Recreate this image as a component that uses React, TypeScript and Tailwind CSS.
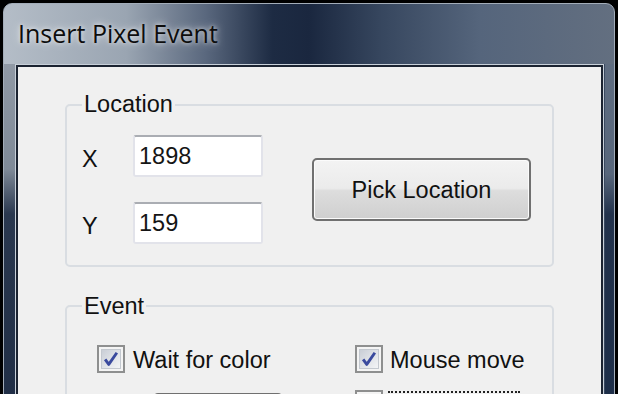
import React from "react";

function CheckBox({ checked }: { checked: boolean }) {
  return (
    <span className="block w-[28px] h-[28px] shrink-0 border-2 border-[#8e8f8f] bg-[#f4f4f4] p-[2px]">
      <span className="block w-full h-full border border-[#c3c8cf] bg-[linear-gradient(135deg,#c9ced6_0%,#dfe2e7_50%,#f3f4f6_100%)]">
        {checked && (
          <svg viewBox="0 0 20 20" className="w-full h-full">
            <path
              d="M3.5 10.5 L7.5 16 L16.5 3"
              fill="none"
              stroke="#3a4a9e"
              strokeWidth="3.2"
              strokeLinejoin="round"
            />
          </svg>
        )}
      </span>
    </span>
  );
}

function TextBox({ value }: { value: string }) {
  return (
    <div className="w-[130px] h-[42px] rounded-[3px] border-2 border-[#e2e3ea] border-t-[#aaadb3] bg-white pl-[4px] flex items-center text-[#151515]">
      {value}
    </div>
  );
}

function Group({ title, className, children }: { title: string; className?: string; children: React.ReactNode }) {
  return (
    <fieldset
      className={`w-[489px] rounded-[5px] border-2 border-[#d9dde2] pl-[15px] ${className ?? ""}`}
    >
      <legend className="px-[2px] leading-[27px] text-[#111]">{title}</legend>
      {children}
    </fieldset>
  );
}

export default function App() {
  return (
    <div className="w-[618px] h-[394px] overflow-hidden bg-black px-[3px] pt-[3px] font-['Liberation_Sans',Arial,sans-serif] text-[23.5px]">
      <div className="h-[440px] flex flex-col rounded-t-[9px] border border-[#a3adb9] overflow-hidden bg-[linear-gradient(to_right,#b4bdc7_0%,#9aa5b2_20%,#5a687e_33%,#1d2b43_44%,#1a273f_50%,#37475f_62%,#55657c_78%,#636f80_100%)]">
        {/* title bar */}
        <div className="h-[60px] shrink-0 pl-[14px] pt-[14px]">
          <div className="font-['Open_Sans',sans-serif] text-[25px] leading-[30px] text-[#0d0d0d] [text-shadow:0_0_10px_rgba(255,255,255,0.75),0_0_4px_rgba(255,255,255,0.6)]">
            Insert Pixel Event
          </div>
        </div>

        <div className="flex flex-1">
          <div className="w-[11px] shrink-0 bg-[linear-gradient(to_bottom,#9099a5_0px,#7f8a98_105px,#2a384f_150px,#1d2b43_100%)]" />
          <div className="flex-1 border border-[#c8d0d9]">
            <div className="h-full border-2 border-[#1b2331] bg-[#f0f0f0] pl-[47px]">
              <Group title="Location" className="mt-[24px] pb-[20px]">
                <div className="pt-[17px] flex items-center">
                  <div className="flex flex-col gap-[25px]">
                    <div className="flex items-center">
                      <span className="w-[51px] mt-[7px] text-[#111]">X</span>
                      <TextBox value="1898" />
                    </div>
                    <div className="flex items-center">
                      <span className="w-[51px] mt-[7px] text-[#111]">Y</span>
                      <TextBox value="159" />
                    </div>
                  </div>
                  <button className="ml-[49px] w-[219px] h-[63px] rounded-[5px] border-2 border-[#707070] bg-[linear-gradient(to_bottom,#f3f3f3_0%,#ebebeb_48%,#dddddd_52%,#cfcfcf_100%)] shadow-[inset_0_0_0_1px_#fbfbfb] text-[#111] pt-[1px]">
                    Pick Location
                  </button>
                </div>
              </Group>

              <Group title="Event" className="mt-[26px] pb-[20px]">
                <div className="pt-[21px]">
                  <div className="flex items-center">
                    <label className="w-[273px] pl-[15px] flex items-center gap-[8px] text-[#111]">
                      <CheckBox checked />
                      <span className="mt-[2px]">Wait for color</span>
                    </label>
                    <label className="flex items-center gap-[7px] text-[#111]">
                      <CheckBox checked />
                      <span className="mt-[2px]">Mouse move</span>
                    </label>
                  </div>
                  <div className="flex items-start mt-[12px]">
                    <div className="w-[273px] pl-[71px] pt-[3px]">
                      <div className="w-[130px] h-[44px] rounded-[5px] border-2 border-[#707070] bg-[linear-gradient(to_bottom,#f3f3f3_0%,#ebebeb_48%,#dddddd_52%,#cfcfcf_100%)]" />
                    </div>
                    <div className="flex items-start gap-[5px]">
                      <CheckBox checked={false} />
                      <span className="mt-[1px] w-[132px] h-[34px] border-2 border-dotted border-[#222]" />
                    </div>
                  </div>
                </div>
              </Group>
            </div>
          </div>
          <div className="w-[10px] shrink-0 border-l border-[#3a4960] bg-[linear-gradient(to_bottom,#5f6d81_0px,#58677c_110px,#22324c_150px,#1c2d48_100%)]" />
        </div>
      </div>
    </div>
  );
}
